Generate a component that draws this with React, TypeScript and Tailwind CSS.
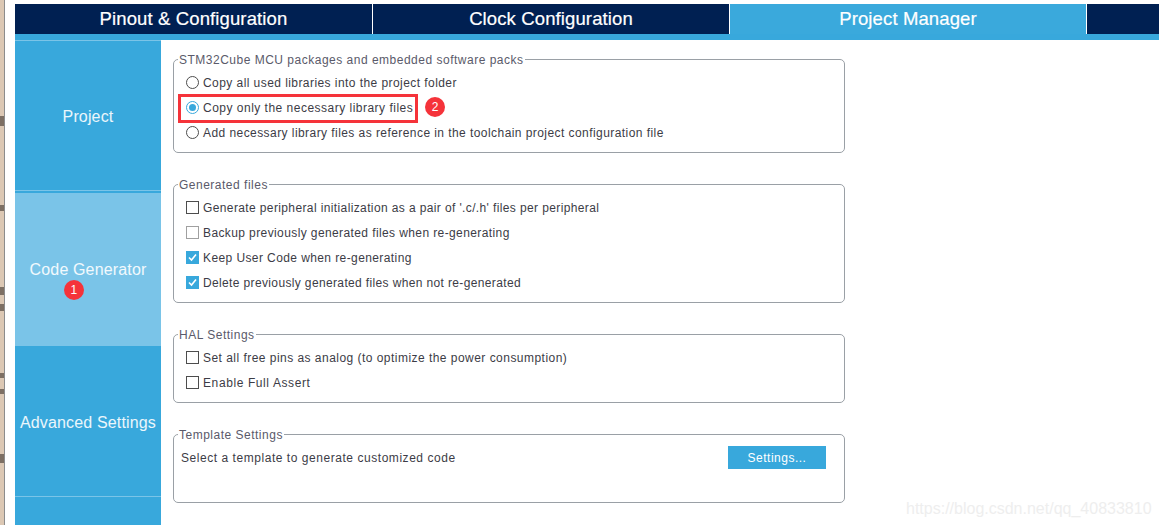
const font = "font-['Liberation_Sans',Arial,sans-serif]"

const Radio = ({ on }: { on?: boolean }) => (
    <span className={`flex h-[13px] w-[13px] shrink-0 items-center justify-center rounded-full border bg-white ${on ? "border-[#38a8dc]" : "border-[#4d4d4d]"}`}>
        {on && <span className="h-[7px] w-[7px] rounded-full bg-[#38a8dc]" />}
    </span>
)

const Check = ({ on, light }: { on?: boolean; light?: boolean }) => (
    <span className={`flex h-[13px] w-[13px] shrink-0 items-center justify-center border ${on ? "border-[#38a8dc] bg-[#38a8dc]" : light ? "border-[#a0a0a0] bg-white" : "border-[#4d4d4d] bg-white"}`}>
        {on && (
            <svg width="11" height="11" viewBox="0 0 11 11" fill="none">
                <path d="M2 5.5 L4.5 8 L9 2.5" stroke="#fff" strokeWidth="1.6" />
            </svg>
        )}
    </span>
)

const Row = ({ children, label, track = "tracking-[0.435px]" }: { children: React.ReactNode; label: string; track?: string }) => (
    <div className={`flex h-[25px] items-center gap-[4px] pl-[12px] text-[12px] text-[#3c3c46] ${track}`}>
        {children}
        <span className="whitespace-nowrap">{label}</span>
    </div>
)

const Group = ({ title, className, children }: { title: string; className: string; children: React.ReactNode }) => (
    <fieldset className={`w-[672px] rounded-[5px] border border-[#9aa0a6] ${className}`}>
        <legend className="ml-[4px] px-[1px] pt-[2px] text-[12px] leading-[8px] tracking-[0.5px] text-[#5a5a6a]">{title}</legend>
        {children}
    </fieldset>
)

const Badge = ({ n }: { n: number }) => (
    <span className="flex h-[20px] w-[20px] shrink-0 items-center justify-center rounded-full bg-[#f5333a] text-[12px] text-white">{n}</span>
)

const tabs = [
    { label: "Pinout & Configuration", w: "w-[358px]" },
    { label: "Clock Configuration", w: "w-[357px]" },
    { label: "Project Manager", w: "w-[357px]", active: true },
]

const side = [
    { label: "Project", h: "h-[150px]", cls: "bg-[#38a8dc] border-t border-[#7ac4e8] pt-[2px]" },
    { label: "Code Generator", h: "h-[153px]", cls: "bg-[#7ac4e8]", badge: true },
    { label: "Advanced Settings", h: "h-[150px]", cls: "bg-[#38a8dc] pt-[3px]" },
]

// fragments of desktop icons showing at the screen edge
const specks = ["top-[116px] h-[10px]", "top-[205px] h-[6px]", "top-[287px] h-[8px]", "top-[304px] h-[7px]", "top-[373px] h-[5px]", "top-[389px] h-[5px]", "top-[454px] h-[9px]"]

export default function App() {
    return (
        <div className={`relative flex h-[525px] w-[1159px] overflow-hidden bg-white ${font}`}>
            <div className="relative h-full w-[5px] shrink-0 border-r border-[#8c8c8c] bg-[#dcc8b4]">
                {specks.map(s => (
                    <span key={s} className={`absolute left-0 w-[4px] bg-[#7d6f63] ${s}`} />
                ))}
            </div>
            <div className="w-[10px] shrink-0" />
            <div className="flex min-w-0 flex-1 flex-col pt-[4px]">
                <div className="flex h-[30px] shrink-0 bg-[#002052]">
                    {tabs.map(t => (
                        <div
                            key={t.label}
                            className={`flex items-center justify-center border-r border-white text-[18.5px] tracking-[0.12px] text-white [-webkit-text-stroke:0.2px_white] ${t.w} ${t.active ? "bg-[#3aa9dc]" : ""}`}
                        >
                            {t.label}
                        </div>
                    ))}
                </div>
                <div className="h-[6px] shrink-0 bg-[#38a8dc]" />
                <div className="flex min-h-0 flex-1">
                    <div className="flex w-[146px] shrink-0 flex-col bg-[#38a8dc]">
                        {side.map((s, i) => (
                            <div key={s.label}>
                                <div className={`relative flex items-center justify-center text-[16px] tracking-[0.15px] text-white/90 ${s.h} ${s.cls}`}>
                                    {s.label}
                                    {s.badge && (
                                        <span className="absolute left-[49px] top-[87px]">
                                            <Badge n={1} />
                                        </span>
                                    )}
                                </div>
                                {i === 0 && <div className="h-[3px] border-t border-[#7ac4e8]" />}
                                {i === 2 && <div className="h-px bg-[#7ac4e8]" />}
                            </div>
                        ))}
                    </div>
                    <div className="flex flex-col pl-[12px] pt-[14px]">
                        <Group title="STM32Cube MCU packages and embedded software packs" className="h-[99px]">
                            <div className="pt-[6px]">
                                <Row label="Copy all used libraries into the project folder"><Radio /></Row>
                                <div className="relative">
                                    <Row label="Copy only the necessary library files" track="tracking-[0.49px]"><Radio on /></Row>
                                    <span className="absolute left-[4px] top-[-1px] h-[29px] w-[240px] border-[3px] border-[#f5333a]" />
                                    <span className="absolute left-[251px] top-[2px]"><Badge n={2} /></span>
                                </div>
                                <Row label="Add necessary library files as reference in the toolchain project configuration file"><Radio /></Row>
                            </div>
                        </Group>
                        <Group title="Generated files" className="mt-[26px] h-[124px]">
                            <div className="pt-[6px]">
                                <Row label="Generate peripheral initialization as a pair of '.c/.h' files per peripheral" track="tracking-[0.38px]"><Check /></Row>
                                <Row label="Backup previously generated files when re-generating" track="tracking-[0.395px]"><Check light /></Row>
                                <Row label="Keep User Code when re-generating" track="tracking-[0.405px]"><Check on /></Row>
                                <Row label="Delete previously generated files when not re-generated" track="tracking-[0.36px]"><Check on /></Row>
                            </div>
                        </Group>
                        <Group title="HAL Settings" className="mt-[26px] h-[74px]">
                            <div className="pt-[6px]">
                                <Row label="Set all free pins as analog (to optimize the power consumption)" track="tracking-[0.467px]"><Check /></Row>
                                <Row label="Enable Full Assert" track="tracking-[0.6px]"><Check /></Row>
                            </div>
                        </Group>
                        <Group title="Template Settings" className="mt-[26px] h-[74px]">
                            <div className="flex items-start justify-between pl-[7px] pr-[18px] pt-[7px] text-[12px] tracking-[0.545px] text-[#3c3c46]">
                                <span className="pt-[3px]">Select a template to generate customized code</span>
                                <button className="flex h-[23px] w-[98px] items-center justify-center bg-[#38a8dc] text-[12px] tracking-[0.5px] text-white">Settings...</button>
                            </div>
                        </Group>
                    </div>
                </div>
            </div>
            <span className="absolute left-[906px] top-[497px] text-[16px] text-[#eeeeee]">https://blog.csdn.net/qq_40833810</span>
        </div>
    )
}
